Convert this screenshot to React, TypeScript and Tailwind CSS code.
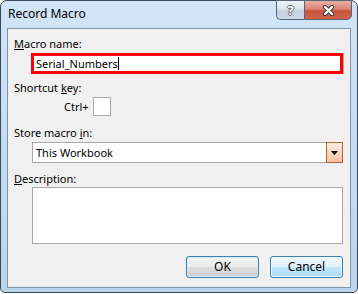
export default function App() {
  return (
    <div className="w-[358px] h-[294px] bg-white font-['Noto_Sans',sans-serif] text-[11px] leading-[16px] text-black">
      <div className="w-[358px] h-[293px] flex flex-col rounded-t-[7px] rounded-b-[5px] border border-[#3b4756] bg-gradient-to-b from-[#d2e5f8] via-[#c4dcf3] to-[#bcd5ef] px-[6px] pb-[4px]">
        {/* title bar */}
        <div className="h-[27px] shrink-0 flex items-start justify-between">
          <span className="pl-[1px] pt-[5px] text-[12px] leading-[16px]">Record Macro</span>
          <div className="flex -mt-px -mr-px">
            <div className="w-[28px] h-[20px] flex items-center justify-center rounded-bl-[5px] border border-r-0 border-[#56667a] bg-[linear-gradient(to_bottom,#eef3f8_0%,#dbe4ee_45%,#c4d2e1_55%,#cbd8e6_100%)]">
              <span className="font-bold text-[13px] leading-[14px] text-white [text-shadow:1px_0_0_#5c6675,-1px_0_0_#5c6675,0_1px_0_#5c6675,0_-1px_0_#5c6675]">
                ?
              </span>
            </div>
            <div className="w-[48px] h-[20px] flex items-center justify-center rounded-br-[5px] border border-[#56667a] bg-[linear-gradient(to_bottom,#eab1a5_0%,#dd8574_45%,#c7503b_55%,#d0654f_100%)]">
              <svg width="13" height="11" viewBox="0 0 13 11">
                <path d="M3 2 L10 9 M10 2 L3 9" stroke="#3c3c3c" strokeWidth="4.4" strokeLinecap="round" fill="none" />
                <path d="M3 2 L10 9 M10 2 L3 9" stroke="#ffffff" strokeWidth="2.4" strokeLinecap="round" fill="none" />
              </svg>
            </div>
          </div>
        </div>

        {/* client area */}
        <div className="flex-1 flex flex-col border border-[#8393a6] bg-[#f0f0f0] pt-[7px] pl-[6px] pr-[7px]">
          <div className="h-[16px]">
            <span className="underline">M</span>acro name:
          </div>
          <div className="mt-[1px] ml-[17px] w-[312px] h-[21px] flex items-center border-[3px] border-[#ff0000] bg-white pl-[2px] shadow-[1px_0_0_#a8a8a8]">
            <span>Serial_Numbers</span>
            <span className="w-px h-[13px] bg-black" />
          </div>

          <div className="mt-[6px] h-[16px]">
            Shortcut <span className="underline">k</span>ey:
          </div>
          <div className="mt-[1px] ml-[50px] h-[19px] flex items-center gap-[4px]">
            <span>Ctrl+</span>
            <div className="w-[18px] h-[19px] border border-[#acacac] bg-white" />
          </div>

          <div className="mt-[9px] h-[16px]">
            Store macro <span className="underline">i</span>n:
          </div>
          <div className="mt-[1px] ml-[18px] w-[311px] h-[21px] flex">
            <div className="flex-1 flex items-center border-y border-l border-[#a8a8a8] bg-white pl-[3px]">
              This Workbook
            </div>
            <div className="w-[17px] h-[21px] flex items-center justify-center border border-[#b0682e] bg-[linear-gradient(to_bottom,#fdeee4_0%,#fad6c0_50%,#f6c1a2_100%)]">
              <svg width="7" height="4" viewBox="0 0 7 4">
                <path d="M0 0 L7 0 L3.5 4 Z" fill="#000" />
              </svg>
            </div>
          </div>

          <div className="mt-[8px] h-[16px]">
            <span className="underline">D</span>escription:
          </div>
          <div className="ml-[18px] w-[311px] h-[57px] border border-[#a8a8a8] bg-white" />

          <div className="mt-[12px] flex justify-end gap-[11px]">
            <button className="w-[73px] h-[22px] rounded-[3px] border border-[#3c7fb1] shadow-[inset_0_0_0_1px_#d6eefb] bg-[linear-gradient(to_bottom,#f3f3f3_0%,#ebebeb_48%,#dddddd_52%,#cfcfcf_100%)] text-[12px] leading-[16px]">
              OK
            </button>
            <button className="w-[73px] h-[22px] rounded-[3px] border border-[#3c7fb1] shadow-[inset_0_0_0_1px_#f4fbff] bg-[linear-gradient(to_bottom,#ecf7fd_0%,#dff2fc_48%,#c3e7fc_52%,#a9daf6_100%)] text-[12px] leading-[16px]">
              Cancel
            </button>
          </div>
        </div>
      </div>
    </div>
  )
}
